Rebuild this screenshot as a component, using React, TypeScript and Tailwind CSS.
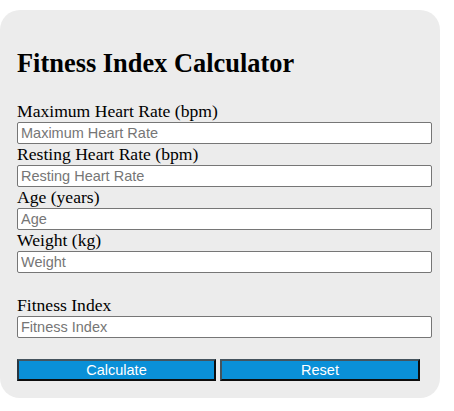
import React from 'react';

const fields = [
  { label: 'Maximum Heart Rate (bpm)', placeholder: 'Maximum Heart Rate' },
  { label: 'Resting Heart Rate (bpm)', placeholder: 'Resting Heart Rate' },
  { label: 'Age (years)', placeholder: 'Age' },
  { label: 'Weight (kg)', placeholder: 'Weight' },
];

function Field({ label, placeholder }: { label: string; placeholder: string }) {
  return (
    <div>
      <label className="block h-[20px] leading-[20px] text-[17.6px] text-black">{label}</label>
      <input
        type="text"
        placeholder={placeholder}
        className="mt-[1px] block h-[22px] w-full rounded-[2px] border border-[#767676] bg-white px-[3px] font-['Liberation_Sans',Arial,sans-serif] text-[14.5px] text-black placeholder:text-[#767676] outline-none"
      />
    </div>
  );
}

export default function App() {
  return (
    <div className="min-h-[411px] bg-white pt-[10px] font-['Liberation_Serif','Times_New_Roman',serif]">
      <div className="w-[440px] rounded-[20px] bg-[#ececec] pt-[38px] pb-[17px] pl-[17px] pr-[8px]">
        <h2 className="h-[30px] leading-[30px] text-[26.4px] font-bold text-black">Fitness Index Calculator</h2>

        <div className="mt-[23px]">
          {fields.map((f) => (
            <Field key={f.label} label={f.label} placeholder={f.placeholder} />
          ))}
        </div>

        <div className="mt-[22px]">
          <Field label="Fitness Index" placeholder="Fitness Index" />
        </div>

        <div className="mt-[21px] flex gap-[4px]">
          <button className="h-[22px] w-[199px] border-2 border-t-[#45545e] border-l-[#2a3640] border-b-[#0d0d0d] border-r-[#0d0d0d] bg-[#0a90d8] font-['Liberation_Sans',Arial,sans-serif] text-[14.5px] leading-none text-white">
            Calculate
          </button>
          <button className="h-[22px] w-[200px] border-2 border-t-[#45545e] border-l-[#45545e] border-b-[#0d0d0d] border-r-[#0d0d0d] bg-[#0a90d8] font-['Liberation_Sans',Arial,sans-serif] text-[14.5px] leading-none text-white">
            Reset
          </button>
        </div>
      </div>
    </div>
  );
}
